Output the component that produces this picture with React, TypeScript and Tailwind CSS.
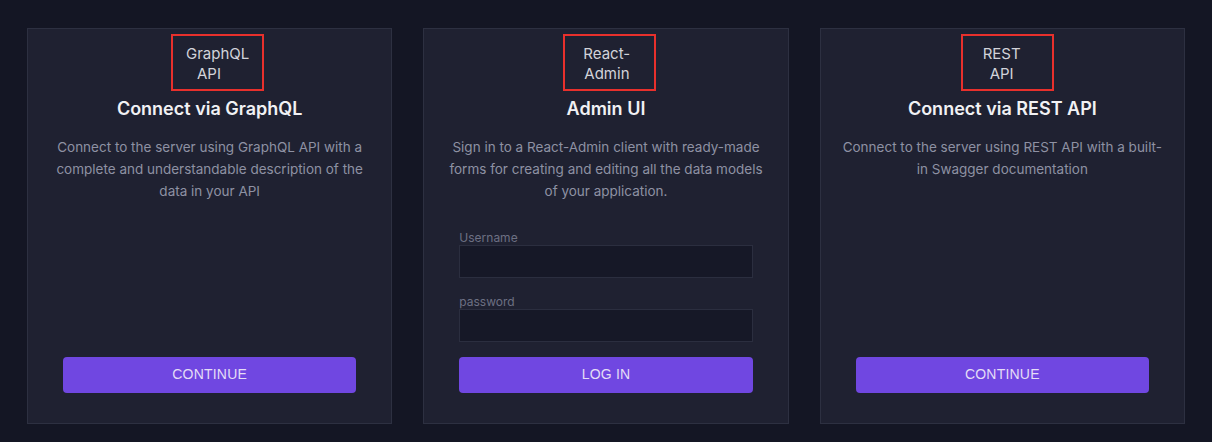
import React from "react";

const inter = { fontFamily: "Inter, 'Noto Sans', sans-serif" };

function AltBox({ lines, ml }: { lines: { text: string; pl: string }[]; ml: string }) {
  return (
    <div className={"w-[93px] h-[57px] border-2 border-[#e8302c] pt-[8px] text-[15px] leading-[20px] text-[#d2d3da] " + ml}>
      {lines.map((l, i) => (
        <div key={i} className={l.pl + " whitespace-nowrap"}>
          {l.text}
        </div>
      ))}
    </div>
  );
}

function Button({ label }: { label: string }) {
  return (
    <button
      className="mt-auto w-full h-[36px] rounded-[4px] bg-[#7047e1] text-[14px] text-[#e4ddf6] tracking-[0.2px] pb-[2px]"
      style={{ fontFamily: "'Liberation Sans', Arial, sans-serif" }}
    >
      {label}
    </button>
  );
}

function Card({
  lines,
  ml,
  title,
  desc,
  children,
  button,
}: {
  lines: { text: string; pl: string }[];
  ml: string;
  title: string;
  desc: string;
  children?: React.ReactNode;
  button: string;
}) {
  return (
    <div className="flex flex-col h-[396px] border border-[#2d3041] bg-[#1f2131] px-[35px] pt-[5px] pb-[30px]">
      <AltBox lines={lines} ml={ml} />
      <div className="mt-[4px] text-center text-[18px] leading-[28px] font-semibold text-[#f1f1f4]">
        {title}
      </div>
      <p className="mt-[13px] mx-[-18px] text-center text-[13.5px] leading-[22px] text-[#8e91a3]">
        {desc}
      </p>
      {children}
      <Button label={button} />
    </div>
  );
}

function Field({ label, className }: { label: string; className?: string }) {
  return (
    <div className={className}>
      <div className="text-[12px] leading-[15px] text-[#6d7083]">{label}</div>
      <div className="h-[33px] border border-[#2b2e3f] bg-[#161827]" />
    </div>
  );
}

export default function App() {
  return (
    <div
      className="w-[1212px] h-[442px] bg-[#141624] px-[27px] pt-[28px]"
      style={inter}
    >
      <div className="grid grid-cols-3 gap-[31px]">
        <Card
          lines={[
            { text: "GraphQL", pl: "pl-[13px]" },
            { text: "API", pl: "pl-[24px]" },
          ]}
          ml="ml-[108px]"
          title="Connect via GraphQL"
          desc="Connect to the server using GraphQL API with a complete and understandable description of the data in your API"
          button="CONTINUE"
        />
        <Card
          lines={[
            { text: "React-", pl: "pl-[18px]" },
            { text: "Admin", pl: "pl-[19px]" },
          ]}
          ml="ml-[104px]"
          title="Admin UI"
          desc="Sign in to a React-Admin client with ready-made forms for creating and editing all the data models of your application."
          button="LOG IN"
        >
          <div className="mt-[28px] flex flex-col">
            <Field label="Username" />
            <Field label="password" className="mt-[16px]" />
          </div>
        </Card>
        <Card
          lines={[
            { text: "REST", pl: "pl-[20px]" },
            { text: "API", pl: "pl-[27px]" },
          ]}
          ml="ml-[105px]"
          title="Connect via REST API"
          desc="Connect to the server using REST API with a built-in Swagger documentation"
          button="CONTINUE"
        />
      </div>
    </div>
  );
}
